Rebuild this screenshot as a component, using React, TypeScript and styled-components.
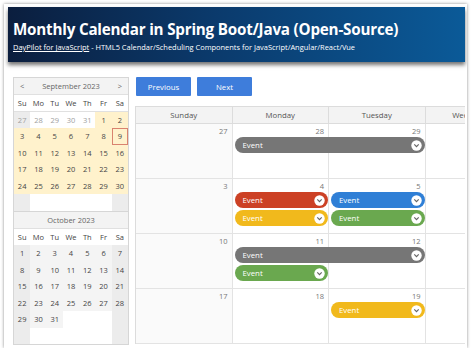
import React from 'react';
import styled, { createGlobalStyle } from 'styled-components';

const GlobalStyle = createGlobalStyle`
  body {
    margin: 0;
    background: #fff;
    font-family: "Open Sans", "Noto Sans", "Liberation Sans", sans-serif;
  }
`;

const Frame = styled.div`
  margin: 4px 0 0 4px;
  width: 463px;
  height: 344px;
  box-sizing: border-box;
  padding: 3px 2px 0 4px;
  background: #fff;
  box-shadow: 0 0 3px rgba(0, 0, 0, 0.45);
  overflow: hidden;
`;

const Header = styled.header`
  height: 55px;
  box-sizing: border-box;
  padding: 12px 5px 0;
  background: linear-gradient(90deg, #0b1e3e 0%, #0b3a6c 45%, #0b5a98 100%);
  box-shadow: 0 3px 4px rgba(0, 0, 0, 0.55);
  color: #fff;
`;

const Title = styled.h1`
  margin: 0;
  font-size: 15.2px;
  font-weight: 700;
  letter-spacing: -0.2px;
  line-height: 20px;
`;

const Subtitle = styled.div`
  margin-top: 3px;
  font-size: 7.45px;
  line-height: 10px;

  a {
    color: #fff;
    text-decoration: underline;
  }
`;

const Body = styled.div`
  display: flex;
  gap: 6px;
  padding: 15px 0 0 5px;
`;

const NavColumn = styled.div`
  width: 116px;
  flex: none;
  display: flex;
  flex-direction: column;
`;

const Month = styled.div`
  border: 1px solid #d6d6d6;
  border-top: none;
  &:first-child {
    border-top: 1px solid #d6d6d6;
  }
`;

const MonthTitle = styled.div`
  height: 16px;
  display: flex;
  align-items: center;
  justify-content: space-between;
  padding: 0 6px;
  background: #f3f3f3;
  border-bottom: 1px solid #e0e0e0;
  color: #666;
  font-size: 7.5px;
`;

const NavGrid = styled.div`
  display: grid;
  grid-template-columns: repeat(7, 1fr);
  grid-auto-rows: 16.5px;
`;

const DayName = styled.div`
  display: flex;
  align-items: center;
  justify-content: center;
  height: 16px;
  border-bottom: 1px solid #e0e0e0;
  font-size: 7.5px;
  color: #444;
  background: #fff;
`;

const NavDay = styled.div<{ $weekend: boolean; $tone: 'sel' | 'other' | 'plain' | 'empty'; $today?: boolean }>`
  display: flex;
  align-items: center;
  justify-content: center;
  box-sizing: border-box;
  font-size: 7.5px;
  color: ${(p) => (p.$tone === 'other' ? '#a0a0a0' : '#444')};
  background: ${(p) =>
    p.$tone === 'sel' ? '#fff2cc' : p.$weekend ? '#ececec' : p.$tone === 'plain' ? '#f4f4f4' : '#fff'};
  border: ${(p) => (p.$today ? '1px solid #d9836f' : 'none')};
`;

const Main = styled.div`
  flex: 1;
  min-width: 0;
  overflow: hidden;
`;

const Toolbar = styled.div`
  display: flex;
  gap: 6px;
  margin-left: 1px;
`;

const Button = styled.button`
  width: 55px;
  height: 19px;
  border: none;
  border-radius: 1px;
  background: #3e7ddb;
  color: #fff;
  font-family: inherit;
  font-size: 7.8px;
  padding: 0;
`;

const Calendar = styled.div`
  margin-top: 10px;
  width: 387px;
  border-left: 1px solid #dcdcdc;
  border-top: 1px solid #dcdcdc;
`;

const HeadRow = styled.div`
  display: grid;
  grid-template-columns: repeat(4, 96.5px);
`;

const HeadCell = styled.div`
  height: 16px;
  display: flex;
  align-items: center;
  justify-content: center;
  background: #f3f3f3;
  border-right: 1px solid #dcdcdc;
  border-bottom: 1px solid #dcdcdc;
  color: #555;
  font-size: 7.8px;
`;

const Week = styled.div`
  display: grid;
  grid-template-columns: repeat(4, 96.5px);
  grid-template-rows: 11px 16px 16px 1fr;
  row-gap: 2px;
  height: 55px;
`;

const Cell = styled.div<{ $col: number; $sunday: boolean }>`
  grid-column: ${(p) => p.$col};
  grid-row: 1 / -1;
  box-sizing: border-box;
  border-right: 1px solid #e3e3e3;
  border-bottom: 1px solid #e3e3e3;
  background: ${(p) => (p.$sunday ? '#fafafa' : '#fff')};
  text-align: right;
  padding: 3px 4px 0 0;
  font-size: 7.5px;
  line-height: 9px;
  color: #777;
`;

const Event = styled.div<{ $color: string; $from: number; $span: number; $line: number }>`
  grid-column: ${(p) => p.$from} / span ${(p) => p.$span};
  grid-row: ${(p) => p.$line + 1};
  margin: 0 1px 0 2px;
  z-index: 1;
  display: flex;
  align-items: center;
  justify-content: space-between;
  padding: 0 3px 0 8px;
  border-radius: 8px;
  background: ${(p) => p.$color};
  color: #fff;
  font-size: 7.8px;
`;

const Chevron = () => (
  <svg width="11" height="11" viewBox="0 0 11 11">
    <circle cx="5.5" cy="5.5" r="5.2" fill="#fff" />
    <polyline points="3.3,4.4 5.5,6.6 7.7,4.4" fill="none" stroke="#666" strokeWidth="1.2" />
  </svg>
);

type Ev = { from: number; span: number; line: number; color: string };

const GRAY = '#767676';
const RED = '#cc4125';
const YELLOW = '#f1b91c';
const BLUE = '#2f7fd6';
const GREEN = '#6aa84f';

// only Sunday..Wednesday fit inside the frame, the rest is cut off anyway
const weeks: { days: number[]; events: Ev[] }[] = [
  { days: [27, 28, 29, 30], events: [{ from: 2, span: 2, line: 1, color: GRAY }] },
  {
    days: [3, 4, 5, 6],
    events: [
      { from: 2, span: 1, line: 1, color: RED },
      { from: 2, span: 1, line: 2, color: YELLOW },
      { from: 3, span: 1, line: 1, color: BLUE },
      { from: 3, span: 1, line: 2, color: GREEN },
    ],
  },
  {
    days: [10, 11, 12, 13],
    events: [
      { from: 2, span: 2, line: 1, color: GRAY },
      { from: 2, span: 1, line: 2, color: GREEN },
    ],
  },
  { days: [17, 18, 19, 20], events: [{ from: 3, span: 1, line: 1, color: YELLOW }] },
];

const dayNames = ['Su', 'Mo', 'Tu', 'We', 'Th', 'Fr', 'Sa'];
const weekDays = ['Sunday', 'Monday', 'Tuesday', 'Wednesday'];

type NavCell = { label: string; tone: 'sel' | 'other' | 'plain' | 'empty'; today?: boolean };

const septCells: NavCell[] = [
  ...[27, 28, 29, 30, 31].map((d) => ({ label: String(d), tone: 'other' as const })),
  ...Array.from({ length: 30 }, (_, i) => ({ label: String(i + 1), tone: 'sel' as const, today: i + 1 === 9 })),
  ...Array.from({ length: 7 }, () => ({ label: '', tone: 'empty' as const })),
];

const octCells: NavCell[] = [
  ...Array.from({ length: 31 }, (_, i) => ({ label: String(i + 1), tone: 'plain' as const })),
  ...Array.from({ length: 11 }, () => ({ label: '', tone: 'empty' as const })),
];

const NavMonth: React.FC<{ title: string; arrows?: boolean; cells: NavCell[] }> = ({ title, arrows, cells }) => (
  <Month>
    <MonthTitle>
      <span>{arrows ? '<' : ''}</span>
      <span>{title}</span>
      <span>{arrows ? '>' : ''}</span>
    </MonthTitle>
    <NavGrid>
      {dayNames.map((n) => (
        <DayName key={n}>{n}</DayName>
      ))}
      {cells.map((c, i) => (
        <NavDay key={i} $weekend={i % 7 === 0 || i % 7 === 6} $tone={c.tone} $today={c.today}>
          {c.label}
        </NavDay>
      ))}
    </NavGrid>
  </Month>
);

const App: React.FC = () => (
  <>
    <GlobalStyle />
    <Frame>
      <Header>
        <Title>Monthly Calendar in Spring Boot/Java (Open-Source)</Title>
        <Subtitle>
          <a href="#">DayPilot for JavaScript</a> - HTML5 Calendar/Scheduling Components for JavaScript/Angular/React/Vue
        </Subtitle>
      </Header>
      <Body>
        <NavColumn>
          <NavMonth title="September 2023" arrows cells={septCells} />
          <NavMonth title="October 2023" cells={octCells} />
        </NavColumn>
        <Main>
          <Toolbar>
            <Button>Previous</Button>
            <Button>Next</Button>
          </Toolbar>
          <Calendar>
            <HeadRow>
              {weekDays.map((d) => (
                <HeadCell key={d}>{d}</HeadCell>
              ))}
            </HeadRow>
            {weeks.map((w, wi) => (
              <Week key={wi}>
                {w.days.map((d, di) => (
                  <Cell key={di} $col={di + 1} $sunday={di === 0}>
                    {d}
                  </Cell>
                ))}
                {w.events.map((e, ei) => (
                  <Event key={ei} $color={e.color} $from={e.from} $span={e.span} $line={e.line}>
                    <span>Event</span>
                    <Chevron />
                  </Event>
                ))}
              </Week>
            ))}
          </Calendar>
        </Main>
      </Body>
    </Frame>
  </>
);

export default App;
